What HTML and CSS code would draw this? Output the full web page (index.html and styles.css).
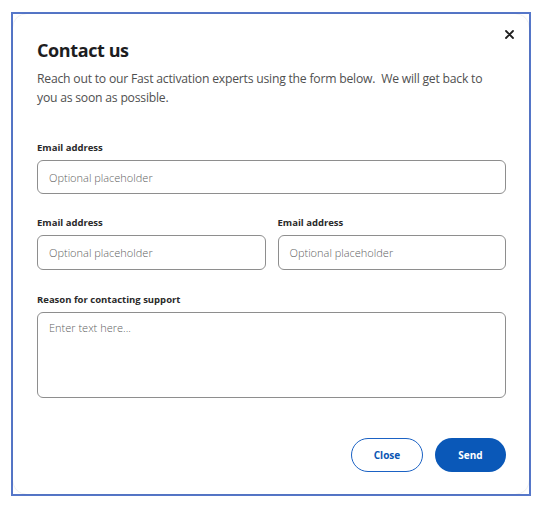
FILE: index.html
```html
<!DOCTYPE html>
<html>
<head>
<meta charset="utf-8">
<link rel="stylesheet" href="styles.css">
</head>
<body>
<div class="frame">
  <div class="card">
    <button class="close-x" aria-label="Close">
      <svg width="9" height="9" viewBox="0 0 9 9"><path d="M1 1L8 8M8 1L1 8" stroke="#1f1f1f" stroke-width="1.8" stroke-linecap="round"/></svg>
    </button>
    <h1 class="title">Contact us</h1>
    <p class="desc">Reach out to our Fast activation experts using the form below.&nbsp; We will get back to you as soon as possible.</p>
    <div class="field">
      <label class="label">Email address</label>
      <div class="input">Optional placeholder</div>
    </div>
    <div class="row">
      <div class="field">
        <label class="label">Email address</label>
        <div class="input">Optional placeholder</div>
      </div>
      <div class="field">
        <label class="label">Email address</label>
        <div class="input">Optional placeholder</div>
      </div>
    </div>
    <div class="field">
      <label class="label">Reason for contacting support</label>
      <div class="input textarea">Enter text here...</div>
    </div>
    <div class="actions">
      <button class="btn btn-outline">Close</button>
      <button class="btn btn-primary">Send</button>
    </div>
  </div>
</div>
</body>
</html>
```
FILE: styles.css
```css
* { box-sizing: border-box; }
html, body { margin: 0; padding: 0; background: #fff; }
body {
  font-family: "Open Sans", "Noto Sans", sans-serif;
  color: #1f1f1f;
  padding: 12px 0 0 11px;
}
.frame {
  width: 520px;
  height: 484px;
  border: 2px solid #5677c9;
}
.card {
  position: relative;
  height: 100%;
  border-radius: 14px;
  box-shadow: 0 0 1.5px rgba(0,0,0,0.18);
  padding: 23px 23px 0 24px;
}
.close-x {
  position: absolute;
  top: 16px;
  right: 15px;
  border: 0;
  background: none;
  padding: 0;
  width: 9px;
  height: 9px;
  display: flex;
}
.title {
  margin: 0;
  font-size: 18px;
  line-height: 26px;
  font-weight: 700;
  color: #1d1d1f;
  letter-spacing: -0.4px;
}
.desc {
  margin: 6px 0 0;
  font-size: 12.2px;
  line-height: 19px;
  color: #505050;
  letter-spacing: -0.22px;
  width: 460px;
}
.field { display: flex; flex-direction: column; }
.card > .field:first-of-type { margin-top: 34px; }
.label {
  font-size: 9.5px;
  font-weight: 700;
  line-height: 14px;
  color: #2a2a2a;
  margin-bottom: 5px;
}
.input {
  height: 34px;
  border: 1px solid #8e8e8e;
  border-radius: 6px;
  padding: 0 11px;
  display: flex;
  align-items: center;
  font-size: 11px;
  font-weight: 300;
  color: #5f5f5f;
}
.row {
  display: grid;
  grid-template-columns: 1fr 1fr;
  gap: 12px;
  margin-top: 22px;
}
.row .input { height: 35px; }
.row + .field { margin-top: 23px; }
.textarea {
  height: 86px;
  align-items: flex-start;
  padding-top: 7px;
}
.actions {
  display: flex;
  justify-content: flex-end;
  gap: 12px;
  margin-top: 40px;
}
.btn {
  height: 34px;
  width: 72px;
  border-radius: 17px;
  font-family: inherit;
  font-size: 10px;
  font-weight: 700;
  padding: 0;
}
.btn-outline {
  background: #fff;
  border: 1.5px solid #1b62c4;
  color: #0b56b3;
}
.btn-primary {
  width: 71px;
  background: #0a58b8;
  border: 0;
  color: #fff;
}
```
